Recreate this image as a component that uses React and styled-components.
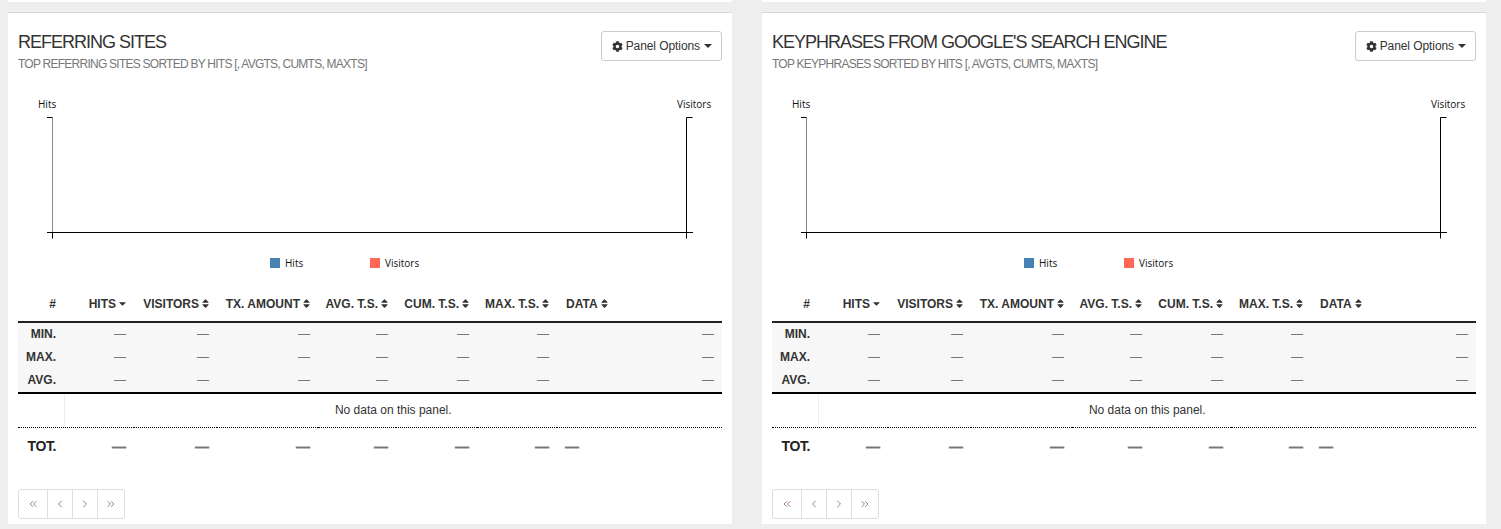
import React from 'react'
import styled, { createGlobalStyle } from 'styled-components'
import { FaCog, FaSort, FaCaretDown } from 'react-icons/fa'
import { ChevronsLeft, ChevronLeft, ChevronRight, ChevronsRight } from 'lucide-react'

const GlobalStyle = createGlobalStyle`
  html, body {
    margin: 0;
    height: 529px;
    overflow: hidden;
    background: #eeeeee;
    font-family: "Liberation Sans", Arial, sans-serif;
    color: #333333;
  }
`

const Page = styled.div`
  display: flex;
  gap: 30px;
  padding: 0 8px;
`
const Column = styled.div`
  width: 724px;
  flex: none;
`
const TopStub = styled.div`
  height: 2px;
  background: #fff;
  margin-bottom: 10px;
`
const Panel = styled.div`
  height: 512px;
  box-sizing: border-box;
  background: #fff;
  border-top: 1px solid #d9d9d9;
  padding: 0 10px;
`
const Header = styled.div`
  display: flex;
  justify-content: space-between;
  align-items: flex-start;
  padding-top: 18px;
`
const Title = styled.h3`
  margin: 1px 0 0;
  font-size: 18px;
  font-weight: 400;
  line-height: 21px;
  letter-spacing: -1px;
  color: #333;
`
const Subtitle = styled.p`
  margin: 4px 0 0;
  font-size: 12px;
  line-height: 14px;
  letter-spacing: -0.75px;
  color: #777;
`
const OptionsButton = styled.button`
  display: flex;
  align-items: center;
  gap: 3px;
  height: 30px;
  padding: 0 9px 0 10px;
  box-sizing: border-box;
  background: #fff;
  border: 1px solid #ccc;
  border-radius: 3px;
  font: 12px "Liberation Sans", Arial, sans-serif;
  letter-spacing: -0.08px;
  color: #333;
  svg { font-size: 11px; }
`
const Caret = styled.span`
  width: 0;
  height: 0;
  margin-left: 1px;
  border-top: 4px solid #333;
  border-left: 4px solid transparent;
  border-right: 4px solid transparent;
`
const Chart = styled.svg`
  display: block;
  width: 704px;
  height: 194px;
  margin-top: 22px;
  font-family: "Open Sans", sans-serif;
  font-size: 10px;
  fill: #111;
`
const Table = styled.table`
  width: 704px;
  table-layout: fixed;
  border-collapse: collapse;
  font-size: 12px;
`
const HeadCell = styled.th`
  height: 35px;
  box-sizing: border-box;
  text-align: ${p => (p.$left ? 'left' : 'right')};
  padding: ${p => (p.$left ? '0 0 0 9px' : '0 8px 0 0')};
  font-weight: 700;
  color: #333;
  border-bottom: 2px solid #222;
  white-space: nowrap;
  svg { width: 7px; height: 11px; margin-left: 3px; vertical-align: -1px; }
`
const StatRow = styled.tr`
  background: #f7f7f7;
  border-bottom: ${p => (p.$last ? '2px solid #000' : '0')};
`
const RowLabel = styled.th`
  height: ${p => (p.$edge ? '24px' : '23px')};
  padding: 0 8px ${p => (p.$edge ? '1px' : '2px')} 0;
  box-sizing: border-box;
  text-align: right;
  font-weight: 700;
  color: #333;
`
const Dash = styled.td`
  padding: 0 8px ${p => (p.$edge ? '1px' : '2px')} 0;
  text-align: right;
  color: #777;
`
const EmptyRow = styled.tr`
  height: 34px;
  border-bottom: 1px dotted #000;
`
const EmptySide = styled.td`
  padding: 0;
  border-right: 1px solid #eee;
`
const EmptyText = styled.td`
  padding: 0 0 1px;
  text-align: center;
  color: #333;
`
const TotalLabel = styled(RowLabel)`
  height: 38px;
  padding: 0 8px 0 0;
  font-size: 14px;
  letter-spacing: -0.4px;
  color: #222;
`
const TotalDash = styled(Dash)`
  font-size: 14px;
  font-weight: 700;
  -webkit-text-stroke: 0.4px #777;
  text-align: ${p => (p.$left ? 'left' : 'right')};
  padding: ${p => (p.$left ? '1px 0 0 8px' : '1px 8px 0 0')};
`
const Pager = styled.div`
  display: inline-flex;
  margin-top: 24px;
  height: 30px;
  box-sizing: border-box;
  border: 1px solid #ddd;
  border-radius: 3px;
`
const PagerButton = styled.span`
  display: flex;
  align-items: center;
  justify-content: center;
  box-sizing: border-box;
  width: ${p => p.$w}px;
  color: #a5806f;
  & + & { border-left: 1px solid #ddd; }
`

const columns = [
  { name: '#', width: 46 },
  { name: 'HITS', width: 70, sorted: true },
  { name: 'VISITORS', width: 83 },
  { name: 'TX. AMOUNT', width: 101 },
  { name: 'AVG. T.S.', width: 78 },
  { name: 'CUM. T.S.', width: 81 },
  { name: 'MAX. T.S.', width: 80 },
  { name: 'DATA', width: 165, left: true },
]

const panels = [
  { title: 'REFERRING SITES', subtitle: 'TOP REFERRING SITES SORTED BY HITS [, AVGTS, CUMTS, MAXTS]' },
  { title: "KEYPHRASES FROM GOOGLE'S SEARCH ENGINE", subtitle: 'TOP KEYPHRASES SORTED BY HITS [, AVGTS, CUMTS, MAXTS]' },
]

const pagerButtons = [
  { Icon: ChevronsLeft, w: 28 },
  { Icon: ChevronLeft, w: 25 },
  { Icon: ChevronRight, w: 25 },
  { Icon: ChevronsRight, w: 27 },
]

function EmptyChart() {
  return (
    <Chart viewBox="0 0 704 194">
      <text x="20" y="15">Hits</text>
      <text x="659" y="15">Visitors</text>
      <path d="M34.5 24.5v115" stroke="#888" fill="none" />
      <path d="M29 24.5h5.5M34.5 139.5v6" stroke="#000" fill="none" />
      <path d="M668.5 24.5h6M668.5 24.5v121M29 139.5h646" stroke="#000" fill="none" />
      <rect x="252" y="165" width="10" height="10" fill="#4682b4" />
      <text x="267" y="174">Hits</text>
      <rect x="352" y="165" width="10" height="10" fill="#ff6854" />
      <text x="367" y="174">Visitors</text>
    </Chart>
  )
}

function StatsTable() {
  const labels = ['MIN.', 'MAX.', 'AVG.']
  return (
    <Table>
      <colgroup>
        {columns.map(c => <col key={c.name} width={c.width} />)}
      </colgroup>
      <thead>
        <tr>
          {columns.map((c, i) => (
            <HeadCell key={c.name} $left={c.left}>
              {c.name}
              {i > 0 && (c.sorted ? <FaCaretDown /> : <FaSort />)}
            </HeadCell>
          ))}
        </tr>
      </thead>
      <tbody>
        {labels.map((label, i) => {
          // first and last rows share their height with the collapsed thick borders
          const edge = i === 0 || i === labels.length - 1
          return (
            <StatRow key={label} $last={i === labels.length - 1}>
              <RowLabel $edge={edge}>{label}</RowLabel>
              {columns.slice(1).map(c => <Dash key={c.name} $edge={edge}>—</Dash>)}
            </StatRow>
          )
        })}
        <EmptyRow>
          <EmptySide />
          <EmptyText colSpan={7}>No data on this panel.</EmptyText>
        </EmptyRow>
      </tbody>
      <tfoot>
        <tr>
          <TotalLabel>TOT.</TotalLabel>
          {columns.slice(1).map(c => <TotalDash key={c.name} $left={c.left}>—</TotalDash>)}
        </tr>
      </tfoot>
    </Table>
  )
}

export default function App() {
  return (
    <Page>
      <GlobalStyle />
      {panels.map(panel => (
        <Column key={panel.title}>
          <TopStub />
          <Panel>
            <Header>
              <div>
                <Title>{panel.title}</Title>
                <Subtitle>{panel.subtitle}</Subtitle>
              </div>
              <OptionsButton><FaCog />Panel Options<Caret /></OptionsButton>
            </Header>
            <EmptyChart />
            <StatsTable />
            <Pager>
              {pagerButtons.map(({ Icon, w }, i) => (
                <PagerButton key={i} $w={w}><Icon size={12} strokeWidth={2} /></PagerButton>
              ))}
            </Pager>
          </Panel>
        </Column>
      ))}
    </Page>
  )
}
